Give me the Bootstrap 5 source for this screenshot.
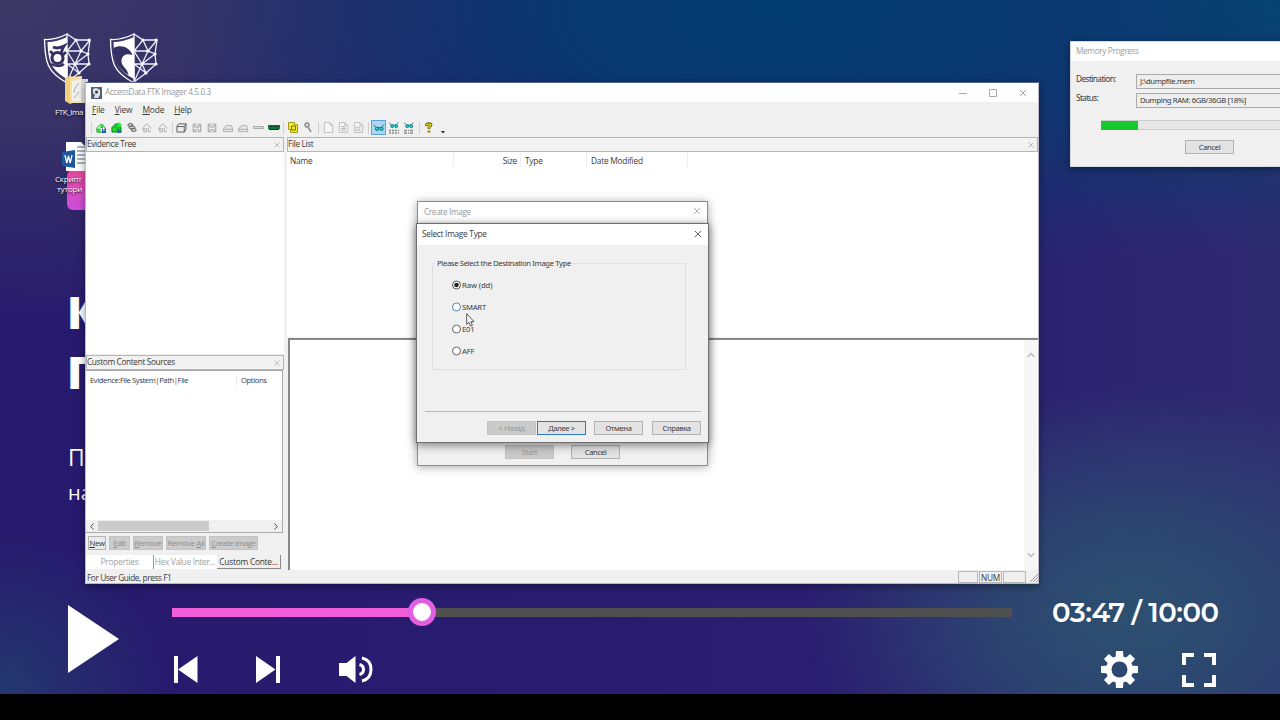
<!DOCTYPE html>
<html lang="ru">
<head>
<meta charset="utf-8">
<title>FTK Imager</title>
<link href="https://cdn.jsdelivr.net/npm/bootstrap@5.3.0/dist/css/bootstrap.min.css" rel="stylesheet">
<style>
body{width:1280px;height:720px;overflow:hidden;background:#000;font-family:"Open Sans","Noto Sans",sans-serif;font-size:8.3px;line-height:1;color:#3a3a3a}
svg{display:block;flex:none}
.stage{width:1280px;height:694px;background:
 radial-gradient(ellipse 330px 230px at 1130px 615px,#2c5070 0,rgba(44,80,112,.75) 40%,rgba(44,80,112,0) 100%),
 radial-gradient(ellipse 620px 300px at 780px 10px,#033d70 0,rgba(3,61,112,.85) 35%,rgba(3,61,112,0) 100%),
 radial-gradient(ellipse 330px 260px at 1270px 0,#064570 0,rgba(6,69,112,0) 100%),
 radial-gradient(ellipse 560px 330px at 0 0,#3c3966 0,rgba(60,57,102,.75) 40%,rgba(60,57,102,0) 100%),
 radial-gradient(ellipse 170px 160px at 0 690px,#24386f 0,rgba(36,56,111,0) 100%),
 linear-gradient(90deg,#27196d 0,#2b1d70 70%,#302a70 100%)}
.t{white-space:nowrap;display:inline-block}
.win,.pos{position:absolute}
.ftk{left:85px;top:82px;width:954px;height:502px;background:#f0f0f0;border:1px solid #b9b9cc;border-top-color:#55648c;box-shadow:0 2px 8px rgba(0,0,0,.4);z-index:3}
.ftk .titlebar{height:19px;background:#fff;color:#9a9a9a}
.menus{height:17px;padding-left:6px;font-size:8.4px;letter-spacing:-.15px}
.menus span{margin-right:10px}
.tools{height:18px;padding:0 0 1px 3px}
.tools i{width:15.3px;height:15px;display:flex;align-items:center;justify-content:center}
.tools b{width:1px;height:12px;background:#cfcfcf;margin:0 1.7px}
.tools i.on{background:#aed6f2;border:1px solid #5ba4dc}
.phead{height:15px;border:1px solid #b5b5b5;background:#f2f2f2;padding:0 3px 0 0;letter-spacing:-.36px}
.lcol{width:198px}
.pane{background:#fff}
.cbtn{background:#cbcbcb;border:1px solid #c2c2c2;color:#8d8d8d;height:14px;display:block;text-align:center;line-height:12px;white-space:nowrap;border-radius:0}
.cbtn.live{background:#e9e9e9;border-color:#b4b4b4;color:#333}
.stat{height:13px;padding-left:0}
.stat .cell{height:12px;border:1px solid #b8b8b8;margin-right:1px;text-align:center;padding-top:2px;letter-spacing:-.2px}
.dlg{background:#f0f0f0;border:1px solid #8b8b8b;font-family:"Noto Sans","Open Sans",sans-serif}
.create{left:417px;top:201px;width:291px;height:265px;z-index:4;box-shadow:0 1px 9px rgba(0,0,0,.35)}
.select{left:416px;top:223px;width:293px;height:220px;z-index:5;box-shadow:0 2px 9px rgba(0,0,0,.5);border-color:#707070}
.mem{left:1070px;top:41px;width:212px;height:126px;z-index:3;border-color:#d8d8e0;box-shadow:0 2px 8px rgba(0,0,0,.4)}
.dlg .titlebar{background:#fff;letter-spacing:-.38px}
.btnw{width:49px;height:14px;background:#e3e3e3;border:1px solid #b2b2b2;display:flex;align-items:center;justify-content:center;white-space:nowrap;font-size:7.6px;letter-spacing:-.35px;padding-top:1px}
.btnw.off{background:#cacaca;border-color:#c2c2c2;color:#959595}
.btnw.def{border:1.5px solid #2b79c4}
.group{margin:18px 22px 0 15px;height:107px;border:1px solid #e0e0e0;position:relative}
.group .cap{position:absolute;top:-4px;left:2px;background:#f0f0f0;padding:0 2px;font-size:7.7px;letter-spacing:-.36px}
.opt{height:22px;gap:1px;display:flex;align-items:center}
.opt span{padding-top:1px}
.field{border:1px solid #aaa;height:15px;width:160px;padding:3px 0 0 3px;background:#eee;flex:none;font-size:7.7px;letter-spacing:-.37px}
.memlab{width:60px;flex:none;padding-top:1px;letter-spacing:-.6px}
.head{font-family:"Open Sans",sans-serif;font-weight:800;color:#fff}
.cover{z-index:1;color:#fff}
.track{height:9px;width:840px;background:#505050}
.played{height:9px;background:#f25fdb;width:250px}
.knob{position:absolute;left:236px;top:-10px;width:28px;height:28px;border-radius:50%;background:#fff;border:5px solid #e45ee2}
.time{font-family:"Montserrat","Inter",sans-serif;font-weight:600;font-size:27.5px;letter-spacing:-.52px;color:#fff;white-space:nowrap}
.lbl{color:#fff;text-shadow:0 1px 2px #000}
u{text-underline-offset:1px;text-decoration-thickness:.7px}
</style>
</head>
<body>
<svg width="0" height="0" class="pos"><defs>
<symbol id="x" viewBox="0 0 8 8"><path d="M.8.8l6.4 6.4M7.2.8L.8 7.2" stroke="currentColor" stroke-width=".8" fill="none"/></symbol>
<symbol id="house" viewBox="0 0 12 12"><path d="M2 7l3.500-4.500h2L11 7M3 7v3.500h3V7.500H1.500M8 6.500v4h3" fill="none" stroke="currentColor"/></symbol>
<symbol id="disk" viewBox="0 0 12 12"><path d="M1.5 1.5h9v9h-9z" fill="none" stroke="#a5a5a5" stroke-width="1.3"/><path d="M3.5 1v4h5V1M3.5 11V8h5v3" fill="#ddd" stroke="#a5a5a5"/></symbol>
<symbol id="drv" viewBox="0 0 12 12"><path d="M1 8l3-4h6l1 4v2.500H1zM1 8h10" fill="#e8e8e8" stroke="#aaa"/></symbol>
<symbol id="page" viewBox="0 0 12 12"><path d="M1.500.5h6l3 3v8h-9z" fill="#f5f5f5" stroke="#bbb"/><path d="M7.500.5v3h3" fill="none" stroke="#bbb"/></symbol>
<symbol id="glass" viewBox="0 0 12 8"><path d="M.5 1l3 2.500h5L11 .5" fill="none" stroke="#087f86"/><circle cx="4" cy="4.800" r="1.700" fill="#35c8c8" stroke="#087f86"/><circle cx="8.500" cy="4.800" r="1.700" fill="#35c8c8" stroke="#087f86"/></symbol>
<symbol id="net" viewBox="0 0 24 50"><path d="M0 1l9 6 14 0-2 14 1 10-10 9-12 9M9 7L0 18M9 7l5 11 9-11M0 18h14l7 3M0 18l8 13 6-13M0 31h8l14 0M8 31l13-10M8 31l4 9M0 31v18l8-18M0 18L9 7M12 40l-12-9" fill="none" stroke="#eef" stroke-width="1.300"/><g fill="#fff"><circle cx="9" cy="7" r="1.600"/><circle cx="22" cy="7" r="1.600"/><circle cx="14" cy="18" r="1.600"/><circle cx="21" cy="21" r="1.600"/><circle cx="8" cy="31" r="1.600"/><circle cx="22" cy="31" r="1.600"/><circle cx="12" cy="40" r="1.600"/></g></symbol>
</defs></svg>

<div class="stage position-relative d-flex flex-column">
 <!-- desktop icons -->
 <svg class="pos" style="left:43px;top:33px" width="49" height="52" viewBox="0 0 49 52"><path d="M24 1Q13 7 1.500 6.500C2 29 4 39 24 50z" fill="none" stroke="#fff" stroke-width="1.300"/><path d="M24 4Q14 9 4.500 9C5 28 8 37 24 46z" fill="#fff"/><path d="M10 14c4 2 7 1 11-1-2 3-3 5-2 8" fill="none" stroke="#343064" stroke-width="3"/><circle cx="14.500" cy="25" r="5.500" fill="#fff" stroke="#343064" stroke-width="3.200"/><path d="M7 18l4 4M8 31q8 4 13 0M20 22l3-3" stroke="#343064" stroke-width="2.500" fill="none"/><use href="#net" x="24" y="0" width="24" height="50"/></svg>
 <svg class="pos" style="left:109px;top:33px" width="50" height="52" viewBox="0 0 50 52"><path d="M25 1Q13 7 1.500 6.500C2 29 4 39 25 50z" fill="none" stroke="#fff" stroke-width="1.300"/><path d="M25 4Q14 9 4.500 9C5 28 8 37 25 46z" fill="#fff"/><path d="M4.500 15c7-4 16-1 19 7-6-2-10 0-11 5-1 6 6 8 7 15C9 36 5 28 4.500 15z" fill="#343064"/><use href="#net" x="25" y="0" width="24" height="50"/></svg>
 <svg class="pos" style="left:64px;top:75px;z-index:1" width="24" height="30" viewBox="0 0 24 30"><path d="M1 3l5-2 5 1v25l-5 2-5-3z" fill="#edcf7d"/><path d="M6 2l12-1v27H6z" fill="#f7df9d"/><path d="M8 6l9-2v23l-9-1z" fill="#f3f1eb"/><path d="M18 4h6v24h-6z" fill="#ddd"/><path d="M10 18c0-5 3-8 5-10M10 23l5-6" stroke="#aaa" fill="none"/></svg>
 <div class="pos cover lbl" style="left:55px;top:108px"><span class="t" style="font-size:8px;letter-spacing:-.42px">FTK_Ima</span></div>
 <div class="pos" style="left:67px;top:170px;width:30px;height:40px;border-radius:6px;background:linear-gradient(#e7479c,#cb4fdb)"></div>
 <svg class="pos" style="left:61px;top:141px;z-index:1" width="25" height="31" viewBox="0 0 25 31"><path d="M5 1h15l5 5v24H5z" fill="#fff"/><path d="M16 6h9M16 10h9M16 14h9M16 18h9M16 22h9" stroke="#567"/><path d="M1 11l13-2v18L1 25z" fill="#1d579d"/><path d="M4 14l1.800 8L7.500 15l1.700 7L11 14" fill="none" stroke="#fff" stroke-width="1.300"/></svg>
 <div class="pos cover lbl" style="left:55px;top:174px;line-height:10px;font-size:8px;letter-spacing:-.2px"><span class="t">Скрипт</span><br><span class="t" style="margin-left:2px">тутори</span></div>
 <div class="pos cover head" style="left:67px;top:282px;width:19px;height:110px;font-size:44px;line-height:60px"><div>К</div><div>Г</div></div>
 <div class="pos cover" style="left:68px;top:439px;width:18px;height:70px;font-size:23px;line-height:36px"><div>П</div><div style="font-size:20px">на</div></div>

 <!-- main window -->
 <div class="win ftk d-flex flex-column">
  <div class="titlebar d-flex align-items-center ps-1">
   <svg width="11" height="12" viewBox="0 0 11 12" style="margin-left:1px"><path d="M0 0h11v12H0z" fill="#536076"/><path d="M2 2l3-1 4 2v5l-2 3H3l1-3-2-2z" fill="#dde4ec"/><circle cx="5.500" cy="5" r="1.500" fill="#333"/></svg>
   <span class="t" style="margin-left:3px;font-size:8.4px;letter-spacing:-.42px">AccessData FTK Imager 4.5.0.3</span>
   <div class="d-flex align-items-center ms-auto" style="gap:22px;margin-right:11px;color:#8d8d8d"><svg width="8" height="8"><path d="M0 4.500h8" stroke="#aaa"/></svg><svg width="8" height="8"><path d="M.5.5h7v7h-7z" fill="none" stroke="#aaa"/></svg><svg width="8" height="8"><use href="#x"/></svg></div>
  </div>
  <div class="menus d-flex align-items-center"><span><u>F</u>ile</span><span><u>V</u>iew</span><span><u>M</u>ode</span><span><u>H</u>elp</span></div>
  <div class="tools d-flex align-items-center"><b></b>
   <i><svg width="10" height="10" viewBox="0 0 12 12"><path d="M1 6l4-4h3l3 4v5H1z" fill="#fff" stroke="#178023"/><path d="M1.500 6.500h4V11h-4zM5 3h4v3H5z" fill="#16d92c"/><path d="M8 7v4h3V7" stroke="#124fb0" stroke-width="1.700" fill="none"/></svg></i>
   <i><svg width="11" height="11" viewBox="0 0 12 12"><path d="M1 6l4-4h3l3 4v5H1z" fill="#16c92c" stroke="#178023"/><path d="M6.500 3h5M9 .5v5M2 8h3" stroke="#1df034" stroke-width="2"/><path d="M8 8v3h3" stroke="#124fb0" stroke-width="1.500" fill="none"/></svg></i>
   <i><svg width="10" height="11" viewBox="0 0 12 12" fill="#ccc" stroke="#444"><ellipse cx="4" cy="3" rx="3" ry="1.800"/><ellipse cx="6" cy="6" rx="3.500" ry="1.800"/><ellipse cx="8" cy="9" rx="3" ry="1.800"/></svg></i>
   <i style="color:#aaa"><svg width="11" height="11"><use href="#house"/></svg></i>
   <i style="color:#aaa"><svg width="11" height="11"><use href="#house"/></svg></i><b></b>
   <i><svg width="11" height="11" viewBox="0 0 12 12"><path d="M1 5l2-3h8v6l-2 3H1zM1 5h8v6M9 5l2-3" fill="#eee" stroke="#555"/></svg></i>
   <i><svg width="10" height="10"><use href="#disk"/></svg></i><i><svg width="10" height="10"><use href="#disk"/></svg></i>
   <i><svg width="12" height="11"><use href="#drv"/></svg></i><i><svg width="12" height="11"><use href="#drv"/></svg></i>
   <i><svg width="11" height="5"><path d="M.5 1.500h10v2H.5z" fill="#ddd" stroke="#aaa"/></svg></i>
   <i><svg width="12" height="5"><path d="M0 0h12v4H0z" fill="#087a36"/><path d="M1 4.500h10M2 1.500h2M5 1.500h2M8 1.500h2" stroke="#12321c"/></svg></i><b></b>
   <i><svg width="10" height="11" viewBox="0 0 10 11"><path d="M.5.5h6v2h3v8h-7v-3h-2z" fill="#f4ee24" stroke="#a09820"/><path d="M3.500 4h4v4h-4z" fill="none" stroke="#77710e"/></svg></i>
   <i><svg width="9" height="11" viewBox="0 0 9 11"><circle cx="3" cy="3" r="2" fill="none" stroke="#999" stroke-width="1.800"/><path d="M4 5l3 5" stroke="#999" stroke-width="1.800"/></svg></i><b></b>
   <i><svg width="11" height="11"><use href="#page"/></svg></i>
   <i><svg width="11" height="11" viewBox="0 0 12 12"><use href="#page"/><path d="M3.500 5h5M3.500 7h5M3.500 9h5" stroke="#aaa"/></svg></i>
   <i><svg width="11" height="11" viewBox="0 0 12 12"><use href="#page"/><path d="M3 5h2v2H3zM6 5h2v2H6zM3 8h2v2H3zM6 8h2v2H6z" fill="#bbb"/></svg></i><b></b>
   <i class="on"><svg width="12" height="8"><use href="#glass"/></svg></i>
   <i><svg width="12" height="12" viewBox="0 0 12 12"><use href="#glass" width="12" height="7"/><path d="M1 8.500h10M1 11h10" stroke="#888" stroke-width="1.300" stroke-dasharray="2 1"/></svg></i>
   <i><svg width="12" height="12" viewBox="0 0 12 12"><use href="#glass" width="12" height="7"/><path d="M1 8.500h10M1 11h10" stroke="#888" stroke-width="1.300" stroke-dasharray="3 1 1 1"/></svg></i><b></b>
   <i><svg width="8" height="11" viewBox="0 0 8 11"><path d="M1.500 4V2.500Q4 .5 6 2.500 6.500 4 4 5v2M4 8.500v2" fill="none" stroke="#555000" stroke-width="2.600"/><path d="M1.500 3.500V2.800Q4 1 6 2.800 6 4 4 5v1.500M4 8.700v1.500" fill="none" stroke="#e7dc18" stroke-width="1.300"/></svg></i>
   <svg width="4" height="13" style="margin-left:5px"><path d="M0 10h4l-2 2.500z" fill="#222"/></svg>
  </div>
  <div class="d-flex" style="height:433px">
   <div class="lcol d-flex flex-column">
    <div class="phead d-flex align-items-center justify-content-between"><span class="t">Evidence Tree</span><svg width="6" height="6" style="color:#999"><use href="#x"/></svg></div>
    <div class="pane" style="height:202px"></div>
    <div class="phead d-flex align-items-center justify-content-between" style="margin-top:1px"><span class="t">Custom Content Sources</span><svg width="6" height="6" style="color:#999"><use href="#x"/></svg></div>
    <div class="pane d-flex flex-column justify-content-between" style="height:163px;border:1px solid #aaa;border-left:0;margin-right:1px">
     <div class="d-flex" style="padding:6px 0 0 4px;font-size:7.6px"><span class="t" style="width:147px;border-right:1px solid #e4e4e4;letter-spacing:-.38px">Evidence:File System|Path|File</span><span class="t" style="padding-left:4px;letter-spacing:-.35px">Options</span></div>
     <div class="d-flex align-items-center justify-content-between" style="height:12px;background:#f0f0f0;padding:0 4px"><svg width="4" height="7"><path d="M3.500.5L.7 3.500l2.800 3" fill="none" stroke="#444"/></svg><div style="width:111px;height:10px;background:#cbcbcb;margin-right:62px"></div><svg width="4" height="7"><path d="M.5.5l2.800 3-2.800 3" fill="none" stroke="#444"/></svg></div>
    </div>
    <div class="d-flex" style="padding:3px 0 0 2px;gap:3px;font-size:7.7px;letter-spacing:-.28px"><div class="cbtn live" style="width:18px"><u>N</u>ew</div><div class="cbtn" style="width:21px"><u>E</u>dit</div><div class="cbtn" style="width:30px"><u>R</u>emove</div><div class="cbtn" style="width:40px">Remove <u>A</u>ll</div><div class="cbtn" style="width:49px"><u>C</u>reate Image</div></div>
    <div class="d-flex text-center" style="height:14px;margin-top:5px;color:#a0a0a0;line-height:14px;letter-spacing:-.2px"><div class="bg-white" style="width:67px">Properties</div><div class="bg-white t" style="width:64px;box-shadow:inset 1px 0 #999;letter-spacing:-.3px">Hex Value Inter...</div><div class="t" style="width:64px;color:#333;border-right:1px solid #888;border-bottom:1px solid #888">Custom Conte...</div></div>
   </div>
   <div class="flex-grow-1" style="margin-left:3px">
    <div class="phead d-flex align-items-center justify-content-between"><span class="t">File List</span><svg width="6" height="6" style="color:#999"><use href="#x"/></svg></div>
    <div class="pane" style="height:185px"><div class="d-flex" style="line-height:18px;height:15px;padding-left:3px;letter-spacing:-.22px"><div style="width:164px;border-right:1px solid #eee">Name</div><div class="text-end" style="width:67px;border-right:1px solid #eee;padding-right:3px">Size</div><div style="width:66px;border-right:1px solid #eee;padding-left:4px">Type</div><div style="width:101px;border-right:1px solid #eee;padding-left:4px">Date Modified</div></div></div>
    <div class="pane d-flex justify-content-end" style="height:232px;border-top:2px solid #888;border-left:2px solid #888;margin:1px 0 0 1px"><div class="d-flex flex-column align-items-center justify-content-between" style="width:13px;background:#f7f7f7;padding:12px 0 12px;margin-right:1px"><svg width="8" height="6"><path d="M.7 5L4 1.500 7.300 5" fill="none" stroke="#bbb" stroke-width="1.500"/></svg><svg width="8" height="6"><path d="M.7 1L4 4.500 7.300 1" fill="none" stroke="#bbb" stroke-width="1.500"/></svg></div></div>
   </div>
  </div>
  <div class="stat d-flex align-items-center"><span class="t" style="letter-spacing:-.42px;padding:3px 0 0 1px">For User Guide, press F1</span><div class="cell ms-auto" style="width:20px"></div><div class="cell" style="width:23px">NUM</div><div class="cell" style="width:23px"></div><svg width="11" height="12"><path d="M3 11l8-8M6 11l5-5M9 11l2-2" stroke="#999"/></svg></div>
 </div>

 <!-- dialogs -->
 <div class="win dlg create d-flex flex-column justify-content-between">
  <div class="titlebar d-flex align-items-center justify-content-between" style="height:20px;padding:0 6px;color:#999"><span class="t" style="font-family:'Open Sans'">Create Image</span><svg width="8" height="8" style="margin-top:-2px"><use href="#x"/></svg></div>
  <div class="d-flex" style="gap:17px;padding:0 0 6px 87px"><div class="btnw off">Start</div><div class="btnw">Cancel</div></div>
 </div>
 <div class="win dlg select">
  <div class="titlebar d-flex align-items-center justify-content-between" style="height:21px;padding:0 6px 0 5px"><span class="t" style="font-family:'Open Sans';letter-spacing:-.28px">Select Image Type</span><svg width="8" height="8" style="margin-top:-2px"><use href="#x"/></svg></div>
  <div class="group"><span class="cap t">Please Select the Destination Image Type</span>
   <div style="padding:10px 0 0 19px;font-size:7.7px;letter-spacing:-.25px">
    <div class="opt"><svg width="9" height="10"><circle cx="4.500" cy="5" r="4" fill="#fff" stroke="#444" stroke-width=".9"/><circle cx="4.500" cy="5" r="2.300" fill="#222"/></svg><span style="letter-spacing:-.1px">Raw (dd)</span></div>
    <div class="opt"><svg width="9" height="10"><circle cx="4.500" cy="5" r="4" fill="#fff" stroke="#347fae" stroke-width=".9"/></svg><span>SMART</span></div>
    <div class="opt"><svg width="9" height="10"><circle cx="4.500" cy="5" r="4" fill="#fff" stroke="#555" stroke-width=".9"/></svg><span>E01</span></div>
    <div class="opt"><svg width="9" height="10"><circle cx="4.500" cy="5" r="4" fill="#fff" stroke="#555" stroke-width=".9"/></svg><span>AFF</span></div>
   </div></div>
  <div style="margin:41px 7px 0 8px;height:1px;background:#b9b9b9"></div>
  <div class="d-flex" style="padding:9px 0 0 70px"><div class="btnw off">&lt; Назад</div><div class="btnw def" style="margin-left:1px">Далее &gt;</div><div class="btnw" style="margin-left:8px">Отмена</div><div class="btnw" style="margin-left:9px">Справка</div></div>
 </div>
 <svg class="pos" style="left:466px;top:313px;z-index:6" width="9" height="14" viewBox="0 0 9 14"><path d="M.7.7v10.600l2.300-2 1.600 3.700 1.800-.8-1.600-3.500H8z" fill="#fff" stroke="#444" stroke-width=".9"/></svg>
 <div class="win dlg mem">
  <div class="titlebar d-flex align-items-center" style="height:19px;padding-left:5px;color:#9b9b9b"><span class="t" style="font-family:'Open Sans'">Memory Progress</span></div>
  <div class="d-flex" style="padding:13px 0 0 5px"><span class="t memlab">Destination:</span><div class="field t">J:\dumpfile.mem</div></div>
  <div class="d-flex" style="padding:4px 0 0 5px"><span class="t memlab">Status:</span><div class="field t">Dumping RAM: 6GB/36GB [18%]</div></div>
  <div style="margin:12px 0 0 30px;height:10px;border:1px solid #ccc;background:#e6e6e6"><div style="width:37px;height:9px;background:#13c92c;margin:-.5px 0 0 -1px"></div></div>
  <div class="btnw" style="margin:10px 0 0 114px">Cancel</div>
 </div>

 <!-- player controls -->
 <div class="mt-auto d-flex" style="height:100px;padding-left:68px">
  <svg width="51" height="69" style="margin-top:11px"><path d="M0 0l51 34L0 68z" fill="#fff"/></svg>
  <div style="margin:14px 0 0 53px;width:840px">
   <div class="track position-relative"><div class="played"></div><div class="knob"></div></div>
   <div class="d-flex" style="margin-top:39px;padding-left:2px">
    <svg width="24" height="27"><path d="M0 0h4v27H0zM23.500 0v27L4 13.500z" fill="#fff"/></svg>
    <svg width="24" height="27" style="margin-left:58px"><path d="M0 0l19.500 13.500L0 27zM20 0h4v27h-4z" fill="#fff"/></svg>
    <svg width="35" height="27" viewBox="0 0 35 27" style="margin-left:59px"><path d="M0 7h7.500L16.500 0v27L7.500 20H0z" fill="#fff"/><path d="M20.500 8.500q4 1 4 5t-4 5M23 2q9 2 9 11.500T23 25" fill="none" stroke="#fff" stroke-width="3"/></svg>
   </div>
  </div>
  <div style="margin:4px 0 0 40px;width:168px">
   <div class="time" style="height:28px;line-height:28px"><span class="t">03:47 / 10:00</span></div>
   <div class="d-flex align-items-center" style="margin-top:25px;padding-left:49px;gap:44px">
    <svg width="37" height="37" viewBox="-18.500 -18.500 37 37"><g fill="#fff"><path id="g" d="M-3.500-18.500h7L4-10v20l-.5 8.500h-7L-4 10v-20z"/><use href="#g" transform="rotate(45)"/><use href="#g" transform="rotate(90)"/><use href="#g" transform="rotate(135)"/><circle r="13.500"/></g><circle r="8" fill="#2b4870"/></svg>
    <svg width="34" height="34"><path d="M2 12V2h10M22 2h10v10M32 22v10H22M12 32H2V22" fill="none" stroke="#fff" stroke-width="4"/></svg>
   </div>
  </div>
 </div>
</div>
<script src="https://cdn.jsdelivr.net/npm/bootstrap@5.3.0/dist/js/bootstrap.bundle.min.js"></script>
</body>
</html>
